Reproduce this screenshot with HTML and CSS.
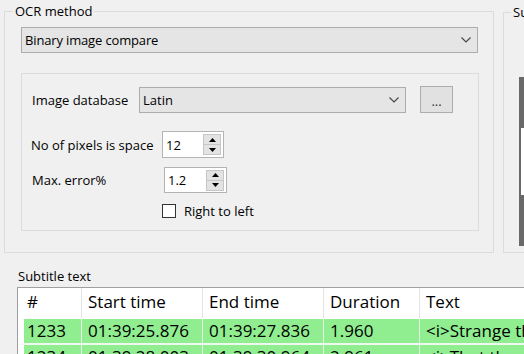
FILE: index.html
```html
<!DOCTYPE html>
<html>
<head>
<meta charset="utf-8">
<link rel="stylesheet" href="styles.css">
</head>
<body>
<div class="top">
  <fieldset class="group group-ocr">
    <legend>OCR method</legend>
    <div class="combo combo-method">
      <span class="combo-text">Binary image compare</span>
      <svg class="chev" width="10" height="6" viewBox="0 0 10 6"><polyline points="0.5,0.5 5,5 9.5,0.5" fill="none" stroke="#444" stroke-width="1.1"/></svg>
    </div>
    <div class="panel">
      <div class="row row-db">
        <span class="lbl lbl-db">Image database</span>
        <div class="combo combo-db">
          <span class="combo-text">Latin</span>
          <svg class="chev" width="10" height="6" viewBox="0 0 10 6"><polyline points="0.5,0.5 5,5 9.5,0.5" fill="none" stroke="#444" stroke-width="1.1"/></svg>
        </div>
        <div class="btn">...</div>
      </div>
      <div class="row row-px">
        <span class="lbl lbl-px">No of pixels is space</span>
        <div class="spin spin-px">
          <span class="spin-val">12</span>
          <div class="spin-btns">
            <div class="sb"><svg width="7" height="4" viewBox="0 0 7 4"><polygon points="0,4 3.5,0 7,4" fill="#000"/></svg></div>
            <div class="sb"><svg width="7" height="4" viewBox="0 0 7 4"><polygon points="0,0 3.5,4 7,0" fill="#000"/></svg></div>
          </div>
        </div>
      </div>
      <div class="row row-err">
        <span class="lbl lbl-err">Max. error%</span>
        <div class="spin spin-err">
          <span class="spin-val">1.2</span>
          <div class="spin-btns">
            <div class="sb"><svg width="7" height="4" viewBox="0 0 7 4"><polygon points="0,4 3.5,0 7,4" fill="#000"/></svg></div>
            <div class="sb"><svg width="7" height="4" viewBox="0 0 7 4"><polygon points="0,0 3.5,4 7,0" fill="#000"/></svg></div>
          </div>
        </div>
      </div>
      <div class="row row-chk">
        <span class="chk"></span>
        <span class="chk-lbl">Right to left</span>
      </div>
    </div>
  </fieldset>
  <fieldset class="group group-img">
    <legend>Subtitle image</legend>
    <div class="preview"><div class="preview-img"></div></div>
  </fieldset>
</div>
<div class="subs">
  <div class="subs-lbl">Subtitle text</div>
  <div class="list">
    <table>
      <colgroup><col class="c1"><col class="c2"><col class="c3"><col class="c4"><col class="c5"></colgroup>
      <thead>
        <tr><th>#</th><th>Start time</th><th>End time</th><th>Duration</th><th>Text</th></tr>
      </thead>
      <tbody>
        <tr><td>1233</td><td>01:39:25.876</td><td>01:39:27.836</td><td>1.960</td><td>&lt;i&gt;Strange things happen</td></tr>
        <tr><td>1234</td><td>01:39:28.003</td><td>01:39:30.964</td><td>2.961</td><td>&lt;i&gt;That they could</td></tr>
      </tbody>
    </table>
  </div>
</div>
</body>
</html>
```
FILE: styles.css
```css
html, body {
  margin: 0;
  padding: 0;
}
body {
  width: 524px;
  height: 354px;
  overflow: hidden;
  background: #f0f0f0;
  font-family: "Open Sans", "Noto Sans", sans-serif;
  font-size: 13px;
  color: #000;
}
.top {
  display: flex;
  align-items: stretch;
  padding: 3px 0 0 4px;
}
.group {
  margin: 0;
  border: 1px solid #dcdcdc;
  box-sizing: border-box;
  min-width: 0;
}
.group legend {
  padding: 0 2px;
  margin-left: -8px;
  line-height: 17px;
}
.group-ocr {
  width: 490px;
  flex: none;
  padding: 7px 14px 21px 16px;
}
.group-img {
  width: 200px;
  flex: none;
  margin-left: 9px;
  margin-top: 1px;
  padding: 56px 0 0 15px;
}
.combo {
  display: flex;
  align-items: center;
  box-sizing: border-box;
  height: 26px;
  border: 1px solid #adadad;
  background: #e5e5e5;
}
.combo-text {
  flex: 1;
  padding-left: 3px;
}
.combo-method .combo-text {
  letter-spacing: -0.15px;
}
.chev {
  margin-right: 6px;
}
.combo-method {
  width: 457px;
}
.panel {
  margin-top: 20px;
  border: 1px solid #dcdcdc;
  padding: 12px 10px 10px 10px;
}
.row {
  display: flex;
  align-items: center;
}
.lbl {
  flex: none;
}
.lbl-db {
  width: 107px;
}
.combo-db {
  width: 267px;
}
.btn {
  margin-left: 14px;
  width: 33px;
  height: 27px;
  box-sizing: border-box;
  border: 1px solid #adadad;
  background: #e1e1e1;
  display: flex;
  align-items: flex-end;
  justify-content: center;
  padding-bottom: 5px;
  line-height: 12px;
  color: #333;
}
.row-px {
  margin-top: 18px;
  margin-left: -1px;
}
.lbl-px {
  width: 131px;
}
.row-err {
  margin-top: 9px;
}
.lbl-err {
  width: 132px;
}
.spin {
  display: flex;
  align-items: center;
  box-sizing: border-box;
  height: 27px;
  border: 1px solid #b4b4b4;
  background: #fff;
  padding: 1px 2px 1px 3px;
}
.spin-px {
  width: 62px;
}
.spin-err {
  width: 63px;
  height: 26px;
}
.spin-val {
  flex: 1;
}
.spin-btns {
  display: flex;
  flex-direction: column;
  width: 18px;
  height: 21px;
  box-sizing: border-box;
  border: 1px solid #c6c6c6;
  background: #e3e3e3;
}
.sb {
  flex: 1;
  display: flex;
  align-items: center;
  justify-content: center;
}
.sb + .sb {
  border-top: 1px solid #c6c6c6;
}
.row-chk {
  margin-top: 9px;
  padding-left: 130px;
}
.chk {
  width: 14px;
  height: 14px;
  box-sizing: border-box;
  border: 1px solid #333;
  background: #fff;
}
.chk-lbl {
  margin-left: 8px;
}
.preview {
  height: 169px;
  background: #696969;
  padding: 51px 0 0 2px;
  box-sizing: border-box;
}
.preview-img {
  height: 67px;
  background: #fff;
}
.subs {
  padding-left: 17px;
}
.subs-lbl {
  margin-top: 14px;
  line-height: 18px;
  padding-left: 1px;
}
.list {
  margin-top: 2px;
  border-left: 1px solid #a0a0a0;
  border-top: 1px solid #a0a0a0;
  background: #fff;
  height: 80px;
}
table {
  border-collapse: separate;
  border-spacing: 0;
  table-layout: fixed;
  width: 600px;
  font-size: 17px;
}
col.c1 { width: 64px; }
col.c2 { width: 121px; }
col.c3 { width: 121px; }
col.c4 { width: 96px; }
col.c5 { width: 198px; }
th {
  font-weight: normal;
  text-align: left;
  height: 31px;
  padding: 0 0 4px 6px;
  box-sizing: border-box;
  border-right: 1px solid #e5e5e5;
  white-space: nowrap;
  overflow: hidden;
}
th:first-child {
  padding-left: 9px;
}
td {
  height: 24px;
  padding: 0 0 0 6px;
  background: #90ee90;
  border-right: 1px solid #e6f7e6;
  border-bottom: 2px solid #eef8ee;
  white-space: nowrap;
  overflow: hidden;
  line-height: 24px;
}
td:first-child {
  border-left: 6px solid #fff;
  padding-left: 3px;
}
```
